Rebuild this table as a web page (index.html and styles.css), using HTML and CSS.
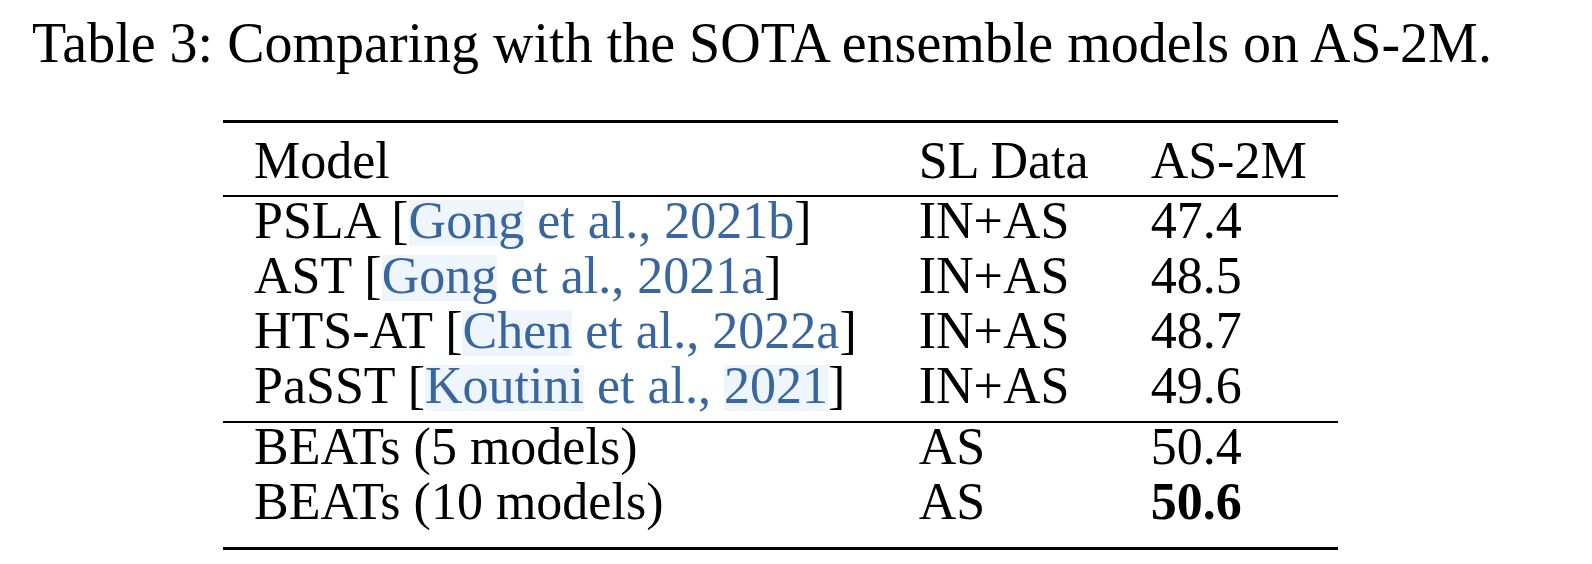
FILE: index.html
```html
<!DOCTYPE html>
<html>

<head>
    <link rel="stylesheet" href="styles.css">
</head>

<body>
    <div class="caption">Table 3: Comparing with the SOTA ensemble models on AS-2M.</div>
    <table class="results">
        <tr class="head">
            <td class="col-model">Model</td>
            <td class="col-data">SL Data</td>
            <td class="col-score">AS-2M</td>
        </tr>
        <tr>
            <td>PSLA [<span class="cite"><span class="hl">Gong</span> et al., 2021b</span>]</td>
            <td>IN+AS</td>
            <td>47.4</td>
        </tr>
        <tr>
            <td>AST [<span class="cite"><span class="hl">Gong</span> et al., 2021a</span>]</td>
            <td>IN+AS</td>
            <td>48.5</td>
        </tr>
        <tr>
            <td>HTS-AT [<span class="cite"><span class="hl">Chen</span> et al., 2022a</span>]</td>
            <td>IN+AS</td>
            <td>48.7</td>
        </tr>
        <tr class="group-end">
            <td>PaSST [<span class="cite"><span class="hl">Koutini</span> et al., <span class="hl">2021</span></span>]</td>
            <td>IN+AS</td>
            <td>49.6</td>
        </tr>
        <tr class="group-start">
            <td>BEATs (5 models)</td>
            <td>AS</td>
            <td>50.4</td>
        </tr>
        <tr class="last">
            <td>BEATs (10 models)</td>
            <td>AS</td>
            <td class="best">50.6</td>
        </tr>
    </table>
</body>

</html>
```

FILE: styles.css
```css
body {
    margin: 0;
    background-color: white;
    color: black;
    font-family: "Liberation Serif", "Times New Roman", serif;
}

/* table caption above the table */
.caption {
    font-size: 56px;
    line-height: 56px;
    margin-top: 15px;
    padding-left: 32px;
    white-space: nowrap;
}

.results {
    margin-top: 49px;
    margin-left: 223px;
    border-collapse: separate;
    border-spacing: 0;
    border-top: 3px solid black;
    border-bottom: 3px solid black;
    font-size: 52px;
    line-height: 48px;
}

.results td {
    padding: 0 31px 7px 31px;
    white-space: nowrap;
    text-align: left;
    vertical-align: top;
}

.col-model {
    width: 601px;
}

.col-data {
    width: 169px;
}

.col-score {
    width: 154px;
}

.results tr.head td {
    padding-top: 14px;
    padding-bottom: 10px;
    border-bottom: 2px solid black;
}

.results tr.group-end td {
    padding-bottom: 11px;
}

.results tr.group-start td {
    border-top: 2px solid black;
}

.results tr.last td {
    padding-bottom: 21px;
}

/* citation links */
.cite {
    color: #3a66a0;
}

.hl {
    background: linear-gradient(to bottom, transparent 8px, #eef5fc 8px, #eef5fc calc(100% - 3px), transparent calc(100% - 3px));
}

.best {
    font-weight: bold;
}
```
